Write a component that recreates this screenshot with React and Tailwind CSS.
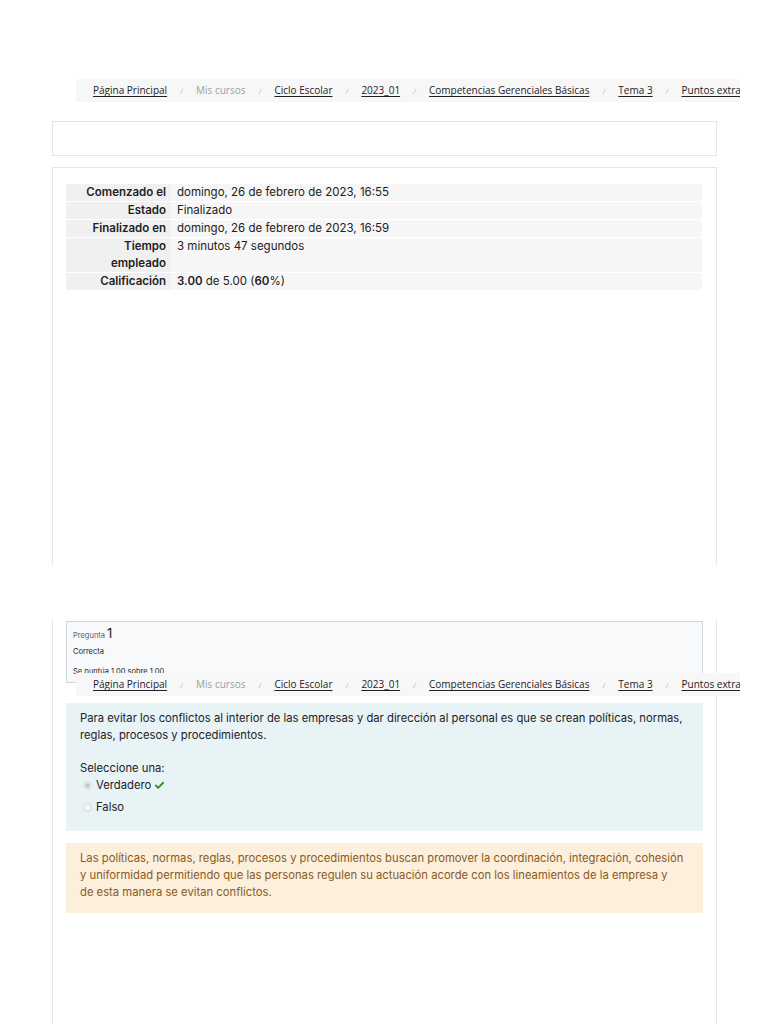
import { Check } from 'lucide-react';

const CRUMBS = [
  { label: 'Página Principal', link: true },
  { label: 'Mis cursos', link: false },
  { label: 'Ciclo Escolar', link: true },
  { label: '2023_01', link: true },
  { label: 'Competencias Gerenciales Básicas', link: true },
  { label: 'Tema 3', link: true },
  { label: 'Puntos extra', link: true },
];

const SUMMARY = [
  { label: 'Comenzado el', value: 'domingo, 26 de febrero de 2023, 16:55' },
  { label: 'Estado', value: 'Finalizado' },
  { label: 'Finalizado en', value: 'domingo, 26 de febrero de 2023, 16:59' },
  { label: 'Tiempo empleado', value: '3 minutos 47 segundos' },
  {
    label: 'Calificación',
    value: (
      <>
        <b className="font-semibold">3.00</b> de 5.00 (<b className="font-semibold">60</b>%)
      </>
    ),
  },
];

const Breadcrumb = ({ className = '' }) => (
  <nav className={`h-[23px] w-[664px] bg-[#f7f7f7] flex items-center pl-[17px] text-[10px] font-['Open_Sans',sans-serif] text-[#1d2125] whitespace-nowrap overflow-hidden ${className}`}>
    {CRUMBS.map((c, i) => (
      <span key={c.label} className="flex items-center">
        {i > 0 && <span className="px-[13px] text-[#b8bcc0] text-[8px]">/</span>}
        {c.link ? (
          <span className="underline underline-offset-2">{c.label}</span>
        ) : (
          <span className="text-[#9aa0a6]">{c.label}</span>
        )}
      </span>
    ))}
  </nav>
);

const Radio = ({ checked }) => (
  <span className="w-[9px] h-[9px] rounded-full border border-[#d6dadd] bg-[#f4f5f6] flex items-center justify-center mr-[4px]">
    {checked && <span className="w-[5px] h-[5px] rounded-full bg-[#c4c8cc]" />}
  </span>
);

export default function App() {
  return (
    <div className="w-[768px] h-[1024px] bg-white overflow-hidden font-['Inter',sans-serif] text-[#1d2125]">
      {/* page 1 */}
      <div className="pt-[79px]">
        <Breadcrumb className="ml-[76px]" />
        <div className="ml-[52px] mt-[19px] w-[665px] h-[35px] border border-[#e2e6ea]" />
        <div className="ml-[52px] mt-[11px] w-[665px] h-[398px] border border-b-0 border-[#e2e6ea] pt-[15px] px-[13px]">
          <table className="w-[636px] text-[11.5px] leading-[17px] border-collapse">
            <tbody>
              {SUMMARY.map((row) => (
                <tr key={row.label} className="border-t border-white">
                  <th className="w-[105px] bg-[#f0f0f0] text-right font-semibold pl-[8px] pr-[5px] align-top">
                    {row.label}
                  </th>
                  <td className="bg-[#f6f6f6] pl-[6px] align-top">{row.value}</td>
                </tr>
              ))}
            </tbody>
          </table>
        </div>
      </div>

      {/* page 2 */}
      <div className="relative ml-[52px] mt-[55px] w-[665px] h-[404px] border-x border-[#e2e6ea] px-[13px] pt-[1px]">
        <div className="h-[62px] bg-[#f8f9fa] border border-[#cfd4da] px-[6px] pt-[4px] overflow-hidden text-[7.5px]">
          <div className="flex items-baseline h-[16px]">
            <span className="text-[#5b6168]">Pregunta</span>
            <span className="ml-[2px] text-[13px] leading-[14px]">1</span>
          </div>
          <div className="mt-[4px]">Correcta</div>
          <div className="mt-[9px]">Se puntúa 1.00 sobre 1.00</div>
        </div>

        <Breadcrumb className="absolute top-[53px] left-[23px]" />

        <div className="mt-[20px] h-[128px] bg-[#e7f3f5] px-[14px] pt-[7px] text-[11.25px] leading-[17px]">
          <p className="w-[612px]">
            Para evitar los conflictos al interior de las empresas y dar dirección al personal es que se crean políticas, normas,
            reglas, procesos y procedimientos.
          </p>
          <p className="mt-[16px]">Seleccione una:</p>
          <div className="flex items-center pl-[3px] h-[17px]">
            <Radio checked />
            <span>Verdadero</span>
            <Check className="ml-[3px] w-[11px] h-[11px] text-[#3c8a2e]" strokeWidth={4} />
          </div>
          <div className="flex items-center pl-[3px] h-[17px] mt-[5px]">
            <Radio />
            <span>Falso</span>
          </div>
        </div>

        <div className="mt-[12px] h-[70px] bg-[#fcefdc] px-[14px] pt-[7px] text-[11.25px] leading-[17px] text-[#8a5a1c]">
          <p className="w-[612px]">
            Las políticas, normas, reglas, procesos y procedimientos buscan promover la coordinación, integración, cohesión
            y uniformidad permitiendo que las personas regulen su actuación acorde con los lineamientos de la empresa y
            <br />
            de esta manera se evitan conflictos.
          </p>
        </div>
      </div>
    </div>
  );
}
